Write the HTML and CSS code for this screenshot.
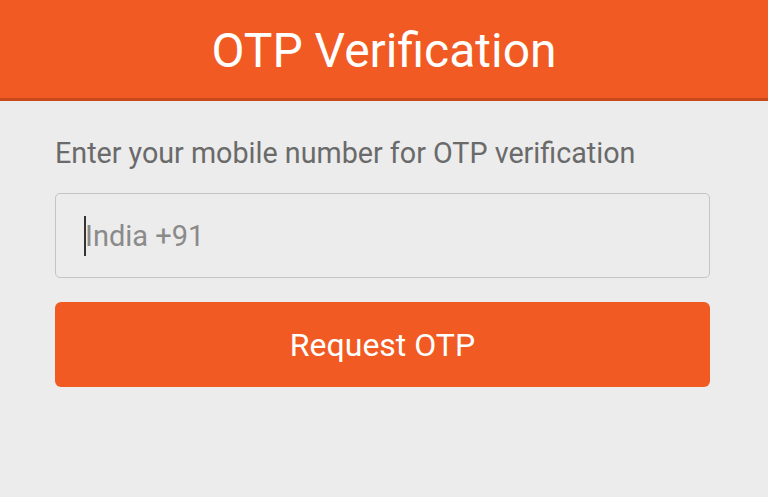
FILE: index.html
```html
<!DOCTYPE html>
<html>
<head>
<meta charset="utf-8">
<link rel="stylesheet" href="styles.css">
</head>
<body>
<header class="topbar"><h1 class="title">OTP Verification</h1></header>
<main class="content">
  <p class="hint">Enter your mobile number for OTP verification</p>
  <div class="field"><span class="caret"></span><span class="placeholder">India +91</span></div>
  <button class="btn">Request OTP</button>
</main>
</body>
</html>
```
FILE: styles.css
```css
html, body { margin: 0; padding: 0; }
body {
  width: 768px;
  height: 497px;
  background: #ececec;
  font-family: Roboto, "Noto Sans", sans-serif;
  overflow: hidden;
}
.topbar {
  height: 98px;
  background: #f15a22;
  border-bottom: 3px solid #c84a1c;
  display: flex;
  align-items: center;
  justify-content: center;
}
.title {
  margin: 0;
  color: #fff;
  font-weight: 400;
  font-size: 48px;
  line-height: 56px;
  padding-top: 4px;
}
.content {
  padding: 0 58px 0 55px;
}
.hint {
  margin: 34px 0 0 0;
  color: #6a6a6a;
  font-size: 28.7px;
  line-height: 36px;
}
.field {
  margin-top: 22px;
  height: 83px;
  border: 1px solid #c4c4c4;
  border-radius: 5px;
  display: flex;
  align-items: center;
  padding-left: 28px;
}
.caret {
  width: 2px;
  height: 40px;
  background: #333;
  margin-right: -1px;
}
.placeholder {
  color: #8a8a8a;
  font-size: 29px;
}
.btn {
  margin-top: 24px;
  width: 100%;
  height: 85px;
  border: none;
  border-radius: 6px;
  background: #f15a22;
  color: #fff;
  font-family: Roboto, "Noto Sans", sans-serif;
  font-size: 32px;
  display: block;
}
```
